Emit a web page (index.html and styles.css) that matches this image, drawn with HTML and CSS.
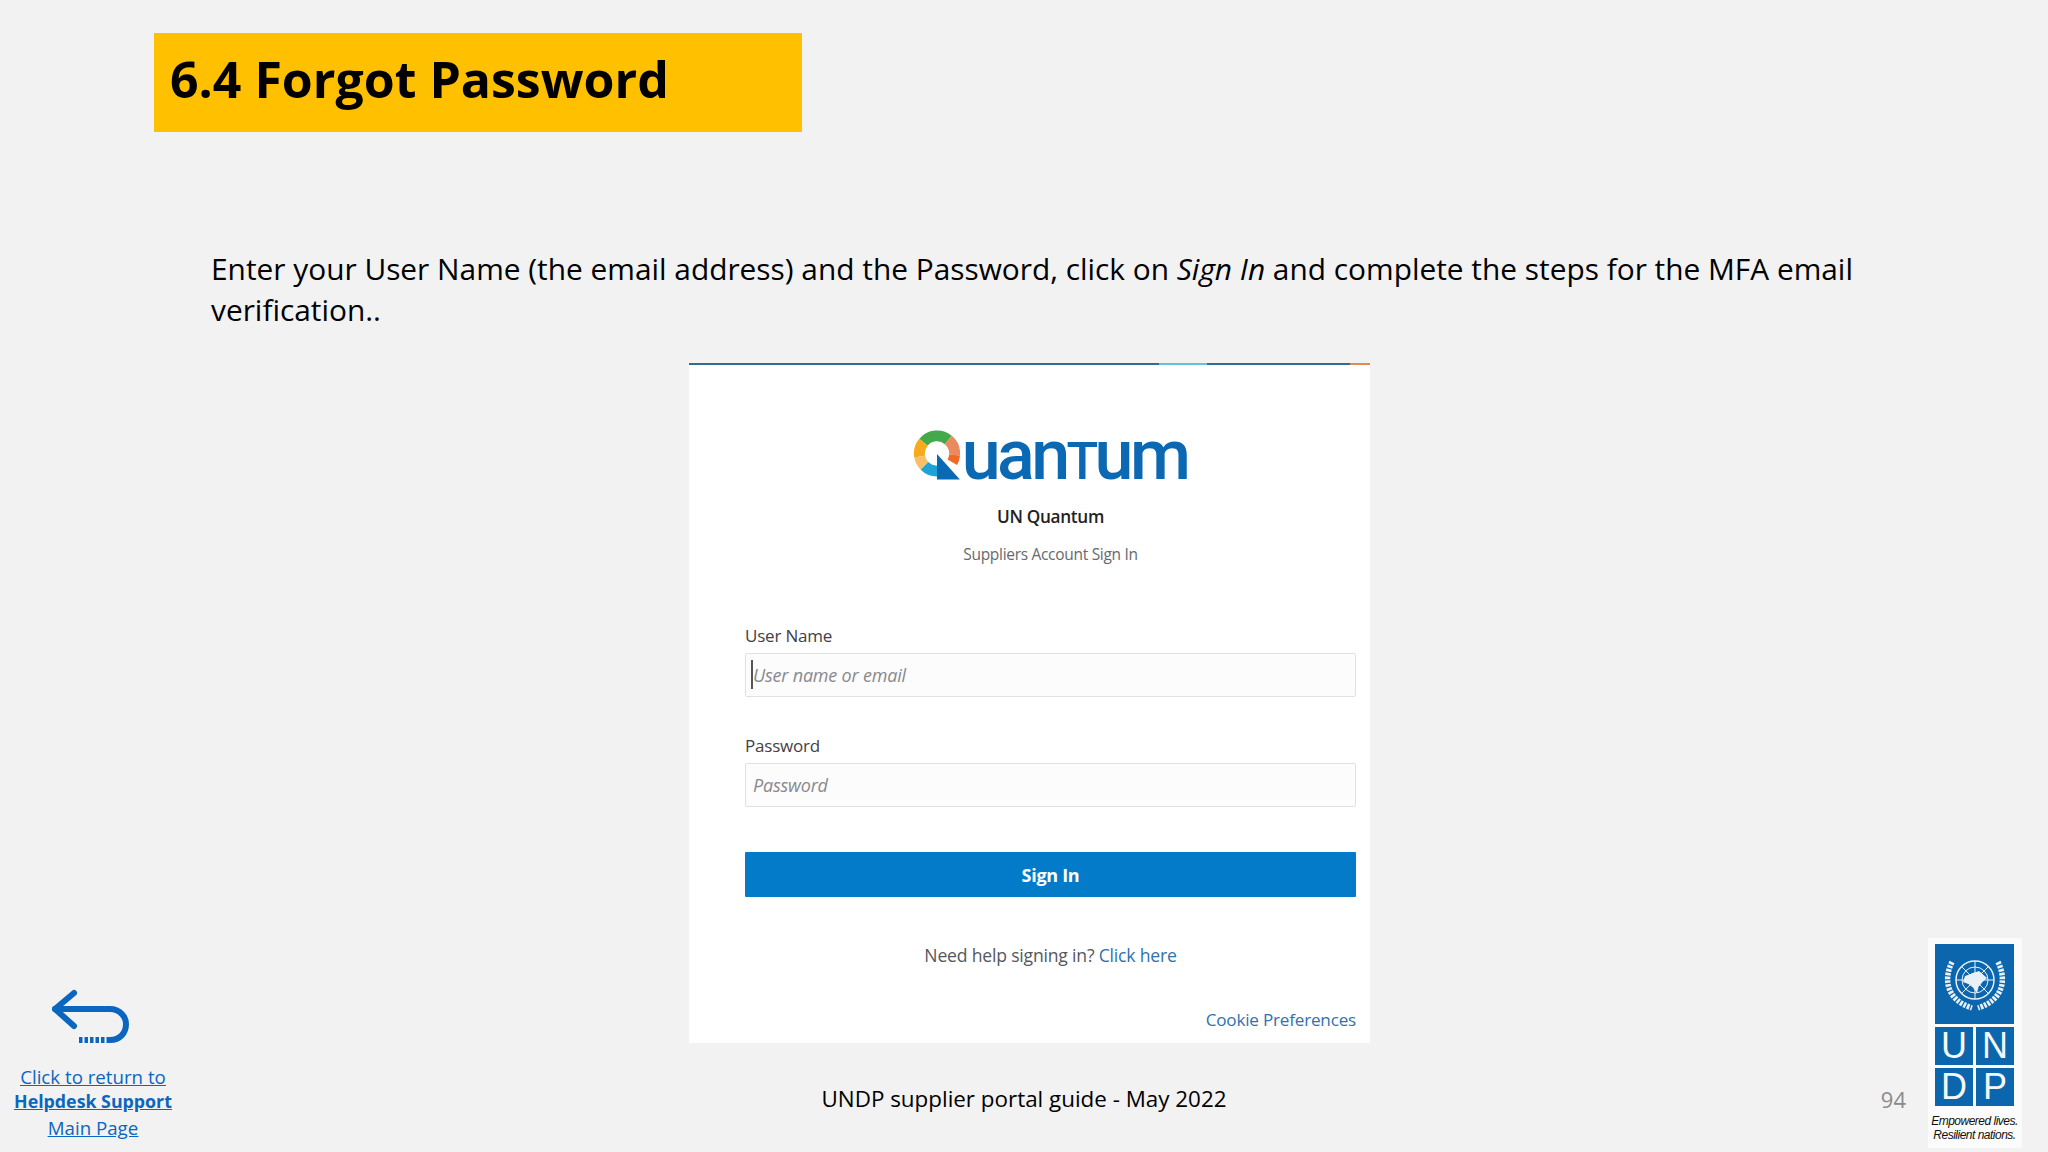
FILE: index.html
```html
<!DOCTYPE html>
<html lang="en">
<head>
<meta charset="utf-8">
<title>6.4 Forgot Password</title>
<link rel="stylesheet" href="styles.css">
</head>
<body>
<div class="slide">
  <h1 class="title">6.4 Forgot Password</h1>
  <p class="intro">Enter your User Name (the email address) and the Password, click on <em>Sign In</em> and complete the steps for the MFA email verification..</p>
  <div class="lower">
    <a class="help" href="#">
      <svg class="help-icon" width="80" height="55" viewBox="0 0 80 55">
        <path d="M22 4 L3 20 L22 37" class="arrow"/>
        <path d="M3 20 H58 C68 20 74 28 74 35 C74 44 68 51 58 51" class="arrow"/>
        <path d="M27 51 H57" class="dots"/>
      </svg>
      <span>Click to return to</span>
      <strong>Helpdesk Support</strong>
      <span>Main Page</span>
    </a>
    <div class="center">
      <section class="card">
        <div class="logo">
          <svg class="q" width="46" height="52" viewBox="0 0 44 50">
            <g fill="none" stroke-width="10.5">
              <path d="M9 13.6 A17 17 0 0 1 32.9 11.5" stroke="#43a94b"/>
              <path d="M32.9 11.5 A17 17 0 0 1 38.9 26" stroke="#e98a5f"/>
              <path d="M38.9 26 A17 17 0 0 1 36.7 33" stroke="#ee6a26"/>
              <path d="M5.3 27.5 A17 17 0 0 1 9 13.6" stroke="#f6ab1d"/>
              <path d="M10 36.5 A17 17 0 0 1 5.3 27.5" stroke="#f8bf66"/>
              <path d="M22 41.5 A17 17 0 0 1 10 36.5" stroke="#1ea3d6"/>
            </g>
            <path d="M22 25 L44 49.5 H22 Z" fill="#0b68b2"/>
          </svg>
          <span class="wordmark">uan<span class="wordmark-t">T</span>um</span>
        </div>
        <div class="app">UN Quantum</div>
        <div class="sub">Suppliers Account Sign In</div>
        <label class="label label-user">User Name</label>
        <div class="input input-user"><i class="caret"></i>User name or email</div>
        <label class="label label-pass">Password</label>
        <div class="input input-pass">Password</div>
        <button class="signin">Sign In</button>
        <div class="need">Need help signing in? <span class="link">Click here</span></div>
        <div class="cookie link">Cookie Preferences</div>
        <div class="stripe"></div>
      </section>
      <div class="caption">UNDP supplier portal guide - May 2022</div>
    </div>
    <div class="right">
      <span class="page">94</span>
      <div class="undp">
        <div class="emblem">
          <svg width="64" height="56" viewBox="0 0 64 56">
            <g fill="none" stroke="#e9f1f8">
              <circle cx="32" cy="24" r="19" stroke-width="1.5"/>
              <circle cx="32" cy="24" r="13" stroke-width="1"/>
              <circle cx="32" cy="24" r="7" stroke-width="1"/>
              <path d="M13 24 H51 M32 5 V43 M18.5 10.5 L45.5 37.5 M45.5 10.5 L18.5 37.5" stroke-width="1"/>
              <path d="M9 6 C0 24 4 44 29 52" stroke-width="5.5" stroke-dasharray="2.6 1.2"/>
              <path d="M55 6 C64 24 60 44 35 52" stroke-width="5.5" stroke-dasharray="2.6 1.2"/>
            </g>
            <path d="M22 20 L36 15 L44 22 L36 29 L34 37 L28 29 L20 26 Z" fill="#e9f1f8"/>
          </svg>
        </div>
        <div class="tile">U</div>
        <div class="tile">N</div>
        <div class="tile">D</div>
        <div class="tile">P</div>
        <div class="tagline">Empowered lives.<br>Resilient nations.</div>
      </div>
    </div>
  </div>
</div>
</body>
</html>
```
FILE: styles.css
```css
* { box-sizing: border-box; }
html, body { margin: 0; padding: 0; }
body { background: #f2f2f2; font-family: "Open Sans", "Liberation Sans", sans-serif; }
.slide { width: 2048px; height: 1152px; overflow: hidden; display: flex; flex-direction: column; background: #f2f2f2; }
.title { width: 648px; height: 99px; margin: 33px 0 0 154px; padding: 0 0 0 16px; background: #ffc000; color: #000; font-size: 50px; line-height: 92px; font-weight: 700; letter-spacing: 0; }
.intro { margin: 116px 0 0 211px; width: 1680px; color: #000; font-size: 29.85px; line-height: 41px; }
.lower { flex: 1; display: grid; grid-template-columns: 186px 1fr 186px; margin-top: 33px; padding-bottom: 4px; min-height: 0; }
.help { align-self: end; display: flex; flex-direction: column; align-items: center; color: #0b66c0; font-size: 18.7px; line-height: 25.5px; text-decoration: underline; padding-bottom: 8px; }
.help span, .help strong { text-decoration: underline; white-space: nowrap; }
.help strong { font-size: 17.8px; }
.help-icon { margin: 0 0 20px -3px; }
.arrow { fill: none; stroke: #0b66c0; stroke-width: 6; stroke-linecap: round; stroke-linejoin: round; }
.dots { fill: none; stroke: #0b66c0; stroke-width: 6; stroke-dasharray: 3.5 2; }
.center { display: flex; flex-direction: column; min-width: 0; }
.card { position: relative; width: 681px; height: 680px; margin-left: 503px; background: #fff; padding: 0 14px 0 56px; display: flex; flex-direction: column; color: #3f4146; }
.stripe { position: absolute; left: 0; right: 0; top: 0; height: 2px; background: linear-gradient(90deg, #2f6f8e 0 69%, #63c3dc 69% 76%, #2f6f8e 76% 97%, #e2895a 97%); }
.logo { display: flex; align-items: flex-end; justify-content: center; height: 56px; margin-top: 66px; gap: 2px; padding-right: 0; }
.q { flex: none; margin-bottom: 5px; }
.wordmark { color: #0b68b2; font-family: "Roboto", sans-serif; font-weight: 500; font-size: 70px; line-height: 56px; letter-spacing: -3.6px; margin-bottom: -5px; }
.wordmark-t { font-size: 52px; }
.app { margin-top: 19px; text-align: center; font-size: 17.2px; line-height: 26px; font-weight: 600; color: #222; letter-spacing: -0.3px; }
.sub { margin-top: 11px; text-align: center; font-size: 15.5px; line-height: 26px; color: #67696e; letter-spacing: -0.3px; }
.label { font-size: 17px; line-height: 26px; color: #3f4146; letter-spacing: -0.2px; }
.label-user { margin-top: 56px; }
.label-pass { margin-top: 36px; }
.input { position: relative; height: 44px; margin-top: 4px; padding-left: 7px; border: 1px solid #e1e1e3; border-radius: 2px; background: #fcfcfc; color: #88898d; font-style: italic; font-size: 18px; line-height: 42px; letter-spacing: -0.2px; }
.caret { position: absolute; left: 5px; top: 6px; width: 2px; height: 29px; background: #555; }
.signin { height: 45px; margin-top: 45px; border: 0; border-radius: 1px; background: #047bc8; color: #fff; font-family: inherit; font-size: 18px; font-weight: 700; letter-spacing: -0.3px; }
.need { margin-top: 45px; text-align: center; font-size: 17.6px; line-height: 26px; color: #55575c; letter-spacing: -0.2px; }
.link { color: #2f72ad; }
.cookie { margin-top: 39px; text-align: right; font-size: 17.1px; line-height: 26px; letter-spacing: -0.2px; }
.caption { margin-top: 41px; text-align: center; font-size: 22.4px; line-height: 30px; color: #000; }
.right { align-self: end; display: flex; align-items: flex-end; justify-content: flex-end; padding-right: 26px; gap: 22px; }
.page { color: #8a8a8a; font-size: 22px; line-height: 30px; margin-bottom: 34px; }
.undp { width: 94px; height: 210px; background: #fbfbfb; padding: 6px 7px 0; display: grid; grid-template-columns: 38px 38px; gap: 3px; grid-template-rows: 80px 38px 38px auto; }
.emblem { grid-column: 1 / 3; background: #0b66ad; display: flex; align-items: center; justify-content: center; }
.tile { background: #0b66ad; color: #f4f8fb; font-size: 36px; font-weight: 400; line-height: 38px; text-align: center; font-family: "Liberation Sans", sans-serif; }
.tagline { grid-column: 1 / 3; margin: 5px -6px 0; text-align: center; font-family: "Liberation Sans", sans-serif; font-style: italic; font-size: 12px; line-height: 14px; letter-spacing: -0.5px; color: #111; white-space: nowrap; }
```
